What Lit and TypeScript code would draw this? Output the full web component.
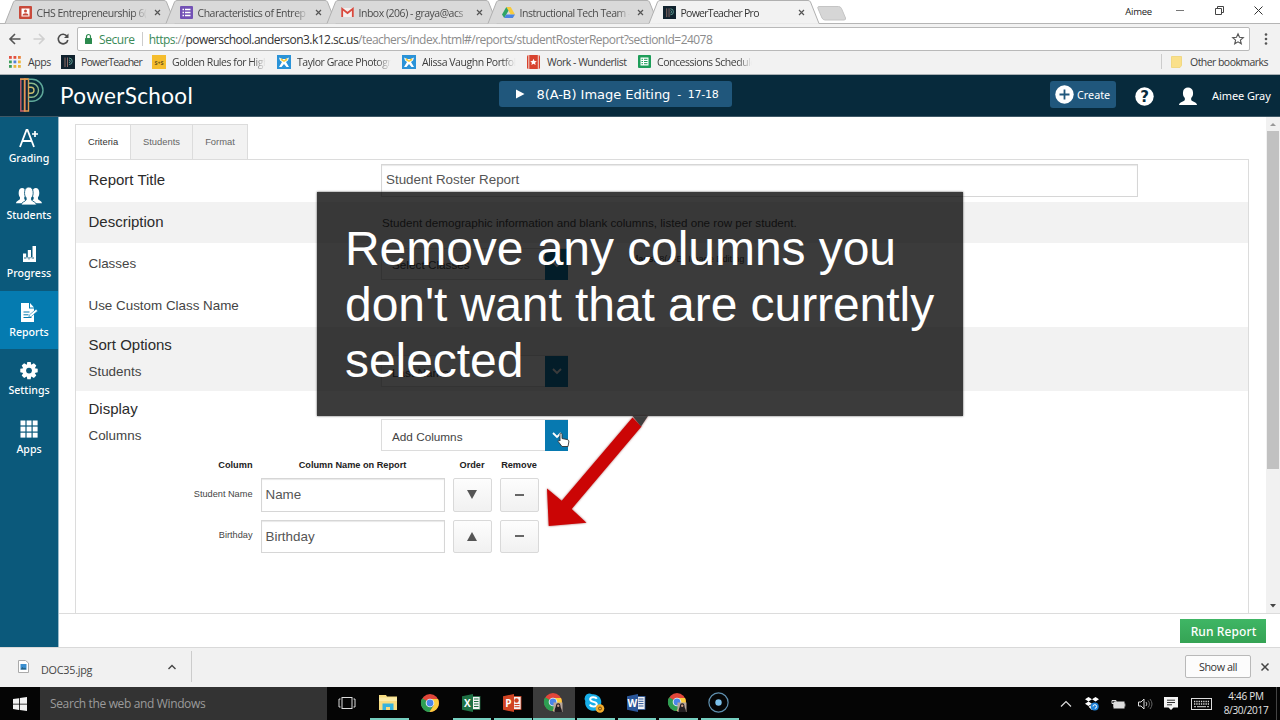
import { LitElement, html, css, svg } from "lit";
import { customElement } from "lit/decorators.js";
import { classMap } from "lit/directives/class-map.js";

const icon = (w: number, h: number, body: unknown, vb = `0 0 ${w} ${h}`) =>
  html`<svg width=${w} height=${h} viewBox=${vb}>${body}</svg>`;

const psMini = (s: number) => icon(s, s, svg`<rect width="14" height="14" fill="#10222e"/><path d="M4 2.500v9.500M6.500 2.500v9.500" stroke="#8a6a66" fill="none"/><path d="M8 3a3 3 0 0 1 0 6.500M8 5a1.300 1.300 0 0 1 0 2.600" stroke="#5b9a92" fill="none"/>`, "0 0 14 14");

const wix = icon(14, 14, svg`<rect width="14" height="14" fill="#2a93d8"/><path d="M2 2.500l3 1.500h4l3-1.500-1 3-2 1.500 3 5-2.500 0-2.500-3-2.500 3-2.500 0 3-5-2-1.500z" fill="#fff"/><path d="M4.500 3l2.500 2.500L9.500 3l1 2-3.500 2L3.500 5z" fill="#f4c93c"/>`);

const chromeLogo = svg`
  <circle cx="9" cy="9" r="9" fill="#e1463a"/>
  <path d="M9 9 1.200 4.500A9 9 0 0 0 9 18z" fill="#2e9e52"/>
  <path d="M1.200 4.500A9 9 0 0 0 8.500 18L12.800 11.200 9 9z" fill="#2e9e52"/>
  <path d="M9 5h8a9 9 0 0 1-8.500 13l4.300-6.800z" fill="#fbce3e"/>
  <circle cx="9" cy="9" r="4.300" fill="#f3f3f3"/><circle cx="9" cy="9" r="3.400" fill="#4a86e8"/>`;
const chrome = icon(18, 18, chromeLogo);
const chromeUser = icon(20, 19, svg`<g>${chromeLogo}</g><rect x="9.500" y="9.500" width="9" height="9.500" fill="#b9a79c"/><path d="M10.500 19c0-3 1-4 1.500-6.500a2.200 2.200 0 0 1 4.400 0c0 2.500 1.600 3.500 1.600 6.500z" fill="#241f22"/><circle cx="14.200" cy="12.800" r="1.200" fill="#c99a84"/>`);

const office = (letter: string, color: string, page: unknown) =>
  icon(19, 18, svg`<rect x="9" y="2.500" width="9" height="13" fill="#f4f4f4" stroke=${color} stroke-width=".8"/>${page}
    <path d="M0 2.200 11 0v18L0 15.800z" fill=${color}/><text x="5.300" y="12.800" text-anchor="middle" class="glyph">${letter}</text>`);

const TABS = [
  { title: "CHS Entrepreneurship 6(", icon: icon(13, 13, svg`<rect width="13" height="13" rx="1" fill="#c8493a"/><rect x="2.500" y="2.500" width="8" height="8" fill="#fff"/><circle cx="6.500" cy="5" r="1.500" fill="#c8493a"/><path d="M3.500 9.500c0-3 6-3 6 0z" fill="#c8493a"/>`) },
  { title: "Characteristics of Entrep", icon: icon(13, 13, svg`<rect width="13" height="13" rx="1" fill="#7351b5"/><path d="M2.500 3.500h1.500M2.500 6.500h1.500M2.500 9.500h1.500M5 3.500h5.500M5 6.500h5.500M5 9.500h5.500" stroke="#fff" stroke-width="1.400"/>`) },
  { title: "Inbox (206) - graya@acs", icon: icon(13, 13, svg`<path d="M1 2h11v9H1z" fill="#f4efee"/><path d="M1.200 11V2.800L6.500 7l5.300-4.200V11" fill="none" stroke="#d9493d" stroke-width="1.800"/>`) },
  { title: "Instructional Tech Team -", icon: icon(13, 13, svg`<path d="M4.300 1h4.400L13 8.500H8.700z" fill="#f7cb3d"/><path d="M4.300 1 0 8.500 2.200 12 6.500 4.800z" fill="#2fa465"/><path d="M4.300 8.500H13L10.800 12H2.200z" fill="#4a84e4"/>`) },
  { title: "PowerTeacher Pro", icon: psMini(13), active: true },
];

const BOOKMARKS = [
  { label: "Apps", cls: "b-apps", icon: icon(12, 12, svg`${[0, 1, 2].map(r => [0, 1, 2].map(c => svg`<rect x=${c * 4.500} y=${r * 4.500} width="2.800" height="2.800" fill=${["#e25041", "#e25041", "#e8833a", "#3f9e5a", "#5381d8", "#efb73a", "#3f9e5a", "#e9b53d", "#e9b53d"][r * 3 + c]}/>`))}`) },
  { label: "PowerTeacher", cls: "b-pt", icon: psMini(14) },
  { label: "Golden Rules for High", cls: "b-long fade", icon: icon(14, 14, svg`<rect width="14" height="14" fill="#f5bd2d"/><text x="7" y="9.600" text-anchor="middle" class="ss">S+S</text>`) },
  { label: "Taylor Grace Photogr", cls: "b-long fade", icon: wix },
  { label: "Alissa Vaughn Portfol", cls: "b-long fade", icon: wix },
  { label: "Work - Wunderlist", cls: "b-wl", icon: icon(14, 14, svg`<rect width="13" height="14" rx="1.500" fill="#d8432f"/><path d="M1.800 0v14M11.300 0v14" stroke="#f4d8cf" stroke-width="1"/><path d="M6.500 3.800l1 2.200 2.300.2-1.700 1.500.5 2.300-2.100-1.200-2.100 1.200.5-2.300-1.700-1.500 2.300-.2z" fill="#fff"/>`) },
  { label: "Concessions Schedule", cls: "b-long fade", icon: icon(13, 13, svg`<rect width="13" height="13" rx="1" fill="#1d9d59"/><path d="M2.500 2.500h8v8h-8z" fill="#fff"/><path d="M3.500 4.300h1.500M3.500 6.500h1.500M3.500 8.700h1.500M6 4.300h3.500M6 6.500h3.500M6 8.700h3.500" stroke="#1d9d59"/>`) },
];

const person = "M0 18c0-3 5-3.500 5.500-5v-2C4 9.500 3.500 7.500 3.800 5 4 2 6 .5 8.500.5S13 2 13.200 5c.3 2.500-.2 4.500-1.700 6v2c.5 1.500 5.500 2 5.500 5z";

const NAV = [
  { label: "Grading", icon: icon(22, 22, svg`<path d="M2 20 8.500 3h1L16 20M4.600 14h8.800" fill="none" stroke="#fff" stroke-width="1.800"/><path d="M14 7h6M17 4v6" stroke="#fff" stroke-width="1.700"/>`) },
  { label: "Students", icon: icon(26, 20, svg`<g fill="#fff"><path d=${person} transform="translate(0 1.500) scale(.72 .88)"/><path d=${person} transform="translate(13.700 1.500) scale(.72 .88)"/><path d=${person} transform="translate(5.200 .500) scale(.9 1.030)" stroke="#0b597b" stroke-width=".9"/></g>`) },
  { label: "Progress", icon: icon(15, 18, svg`<path d="M1 8.500h3.200V12H1zM5.800 5h3.200v7H5.800zM10.500 1h3.500v11h-3.500zM1 12h13v5H1z" fill="#fff"/><path d="M3 12v2M5 12v1.300M7 12v2.500M9 12v1.300M11 12v2" stroke="#0b597b" stroke-width=".9"/>`) },
  { label: "Reports", active: true, icon: icon(18, 20, svg`<path d="M1 1h8v5.500h5V20H1z" fill="#fff"/><path d="M10 1l4 4.500h-4z" fill="#fff"/><path d="M3.500 10h6M3.500 12.800h5M3.500 15.500h8" stroke="#057bb0" stroke-width="1"/><path d="M8.800 15.200l.6-2.300L16 7.300l1.700 1.700-6.500 5.600z" fill="#fff" stroke="#057bb0" stroke-width=".6"/>`) },
  { label: "Settings", icon: icon(20, 20, svg`<path d="M8.300 1h3.400l.5 2.800 2.700-1.600 2.400 2.400-1.500 2.600 2.900.6v3.500l-2.900.6 1.500 2.700-2.400 2.400-2.700-1.600-.5 2.800H8.300l-.5-2.800L5.100 17l-2.400-2.400 1.500-2.700-2.900-.6V7.800l2.900-.6L2.700 4.600l2.400-2.400 2.700 1.600z" fill="#fff"/><circle cx="10" cy="9.600" r="2.900" fill="#0b597b"/>`) },
  { label: "Apps", icon: icon(18, 18, svg`${[0, 1, 2].map(r => [0, 1, 2].map(c => svg`<rect x=${.5 + c * 6.100} y=${.5 + r * 6.100} width="4.900" height="4.900" fill="#fff"/>`))}`) },
];

const TASKS = [
  { kind: "none", icon: icon(18, 14, svg`<rect x="4" y="1.500" width="10" height="11" fill="none" stroke="#ddd"/><path d="M2.500 3H1v8h1.500M15.500 3H17v8h-1.500" fill="none" stroke="#ddd"/>`) },
  { kind: "open", icon: icon(20, 17, svg`<path d="M1 1h7l1 1.500h10V16H1z" fill="#f7dc80"/><path d="M1 3.500h18V7H1z" fill="#fbeaa6"/><path d="M4.500 16V9.500h11V16H12v-3H8v3z" fill="#35b3de"/>`) },
  { kind: "none", icon: chrome },
  { kind: "open", icon: office("X", "#1f7145", svg`<path d="M12 5h4.500M12 7.500h4.500M12 10h4.500M12 12.500h4.500" stroke="#1f7145"/>`) },
  { kind: "open", icon: office("P", "#d04423", svg`<circle cx="13.500" cy="6.500" r="2.200" fill="#d04423"/><path d="M11.500 10.500h5M11.500 12.700h5" stroke="#d04423"/>`) },
  { kind: "active", icon: chromeUser },
  { kind: "open", icon: icon(21, 20, svg`<path d="M5 .5a5 5 0 0 1 3 .8 8 8 0 0 1 9 10A5 5 0 0 1 11 17.500 8 8 0 0 1 1.300 8 5 5 0 0 1 5 .5z" fill="#17aee8"/><path d="M12.800 5.800C11.500 3.500 6 3.700 6.200 6.500c.2 3 6.600 1.700 6.600 4.700 0 2.900-5.800 3-7 .3" stroke="#fff" stroke-width="2" fill="none"/><circle cx="16" cy="15.500" r="4.300" fill="#f3ac2c"/><circle cx="16" cy="15.500" r="1.500" fill="none" stroke="#6e4a12"/>`) },
  { kind: "open", icon: office("W", "#2a5699", svg`<path d="M11.500 5h5M11.500 7.300h5M11.500 9.600h5M11.500 12h5" stroke="#2a5699"/>`) },
  { kind: "open", icon: chromeUser },
  { kind: "open", icon: icon(21, 21, svg`<circle cx="10.500" cy="10.500" r="9.600" fill="none" stroke="#5f8fae" stroke-width="1.200"/><circle cx="10.500" cy="10.500" r="3.200" fill="#7cc0ea"/>`) },
];

const COLUMNS = [
  { column: "Student Name", name: "Name", up: false },
  { column: "Birthday", name: "Birthday", up: true },
];

const base = css`
  * { box-sizing: border-box; }
  svg { display: block; flex: none; overflow: visible; }
`;

@customElement("browser-chrome")
class BrowserChrome extends LitElement {
  static styles = [base, css`
    :host { display: block; height: 75px; font: 10.500px "Open Sans", sans-serif; color: #4c4c4c; background: #f2f2f2; border-bottom: 1px solid #a9b0b4; }
    .tabs { display: flex; height: 24px; padding-left: 5px; background: #fff; border-bottom: 1px solid #b5b5b5; }
    .tab { position: relative; width: 161px; height: 24px; display: flex; align-items: center; padding: 1px 0 0 14px; }
    .shape { position: absolute; left: 0; top: 0; }
    .fav { position: relative; width: 17.500px; }
    .title { position: relative; width: 111px; overflow: hidden; white-space: nowrap; letter-spacing: -.48px; mask-image: linear-gradient(90deg, #000 87%, transparent 99%); }
    .active .title { color: #333; letter-spacing: -.72px; }
    .tab .x { position: relative; margin-left: 6px; }
    .newtab { margin: 6px 0 0 7px; }
    .window { display: flex; margin-left: auto; padding: 0 17px 2px 0; align-items: center; }
    .user { font-size: 9.500px; margin: 2px 24px 0 0; letter-spacing: -.2px; color: #222; }
    .restore { margin: 0 30px; }
    .bar { display: flex; align-items: center; height: 27px; padding: 3px 12px 0 9px; }
    .reload { margin: 0 8px 0 12px; }
    .fwd { margin-left: 12px; }
    .url { display: flex; align-items: center; width: 1173px; height: 24px; border: 1px solid #b9b9b9; border-radius: 2px; background: #fff; padding: 0 5px 0 7px; font-size: 12px; }
    .secure { color: #3b8a58; margin: 0 7px 0 7px; letter-spacing: -.4px; }
    .sep { width: 1px; height: 14px; background: #ccc; margin-right: 6px; }
    .address { letter-spacing: -.53px; color: #8b8b8b; white-space: nowrap; }
    .address b { font-weight: 400; color: #333; }
    .address i { font-style: normal; color: #3b8a58; }
    .star { margin-left: auto; }
    .menu { margin-left: 14px; }
    .marks { display: flex; align-items: center; height: 21px; padding-left: 9px; }
    .mark { display: flex; align-items: center; gap: 6px; white-space: nowrap; letter-spacing: -.46px; color: #3d3d3d; overflow: hidden; }
    .fade { mask-image: linear-gradient(90deg, #000 87%, transparent 99%); }
    .b-apps { width: 52px; gap: 7px; letter-spacing: -.4px; }
    .b-pt { width: 91px; letter-spacing: -.76px; }
    .b-long { width: 115px; margin-right: 10px; }
    .b-wl { width: 111px; letter-spacing: -.5px; }
    .other { display: flex; align-items: center; gap: 8px; margin-left: auto; padding: 0 12px 0 9px; height: 15px; border-left: 1px solid #ccc; letter-spacing: -.55px; color: #3d3d3d; }
    .ss { font: 700 5.500px "Open Sans", sans-serif; letter-spacing: 0; fill: #6b541c; }
  `];

  render() {
    return html`
      <div class="tabs">
        ${TABS.map(t => html`<div class=${classMap({ tab: true, active: !!t.active })}>
          <span class="shape">${icon(172, 24, svg`<path d="M0 23.500 8.500 2Q9.300.5 11 .5H159Q160.800.5 161.500 2L170 23.500" fill=${t.active ? "#f2f2f2" : "#d9d9d9"} stroke="#b0b0b0"/>${t.active ? svg`<path d="M.5 24h169" stroke="#f2f2f2" stroke-width="1.500"/>` : ""}`)}</span>
          <span class="fav">${t.icon}</span><span class="title">${t.title}</span>
          <span class="x">${icon(7, 7, svg`<path d="M1 1l5 5M6 1 1 6" stroke="#555" stroke-width="1.200"/>`)}</span>
        </div>`)}
        <span class="newtab">${icon(30, 15, svg`<path d="M1.500.5h20q2 0 3 2l4 9.500q.5 2-1.500 2H8q-2 0-3-2L1 2.500Q.5.5 1.500.5z" fill="#d6d6d6" stroke="#c4c4c4"/>`)}</span>
        <div class="window">
          <span class="user">Aimee</span>
          ${icon(9, 9, svg`<path d="M0 4.500h8" stroke="#777"/>`)}
          <span class="restore">${icon(9, 9, svg`<path d="M.5 2.500h6v6h-6zM2.500 2V.5h6v6H7" fill="none" stroke="#444"/>`)}</span>
          ${icon(9, 9, svg`<path d="M.5.5l8 8M8.500.5l-8 8" stroke="#333"/>`)}
        </div>
      </div>
      <div class="bar">
        ${icon(12, 12, svg`<path d="M11.500 6H1.500M6 1 1 6l5 5" fill="none" stroke="#555" stroke-width="1.600"/>`)}
        <span class="fwd">${icon(12, 12, svg`<path d="M.5 6h10M6 1l5 5-5 5" fill="none" stroke="#d0d0d0" stroke-width="1.600"/>`)}</span>
        <span class="reload">${icon(12, 12, svg`<path d="M10 3.200A4.800 4.800 0 1 0 10.800 7" fill="none" stroke="#4d4d4d" stroke-width="1.600"/><path d="M11.500.5V5H7z" fill="#4d4d4d"/>`)}</span>
        <div class="url">
          ${icon(7, 10, svg`<rect y="4" width="7" height="6" rx=".5" fill="#2c8a4e"/><path d="M1.500 4V2.500a2 2 0 0 1 4 0V4" fill="none" stroke="#2c8a4e" stroke-width="1.200"/>`)}
          <span class="secure">Secure</span><span class="sep"></span>
          <span class="address"><i>https</i>://<b>powerschool.anderson3.k12.sc.us</b>/teachers/index.html#/reports/studentRosterReport?sectionId=24078</span>
          <span class="star">${icon(12, 12, svg`<path d="M6 .8l1.500 3.500 3.800.3-2.900 2.500.9 3.700L6 8.800l-3.300 2 .9-3.700L.7 4.600l3.800-.3z" fill="none" stroke="#555" stroke-width="1.100"/>`)}</span>
        </div>
        <span class="menu">${icon(4, 12, svg`<circle cx="2" cy="1.500" r="1.300" fill="#555"/><circle cx="2" cy="6" r="1.300" fill="#555"/><circle cx="2" cy="10.500" r="1.300" fill="#555"/>`)}</span>
      </div>
      <div class="marks">
        ${BOOKMARKS.map(b => html`<div class="mark ${b.cls}">${b.icon}<span>${b.label}</span></div>`)}
        <div class="other">${icon(11, 12, svg`<path d="M.5.5h10v9l-1.500 2H.5z" fill="#fae08a" stroke="#f0d374" stroke-width=".8"/>`)}<span>Other bookmarks</span></div>
      </div>`;
  }
}

@customElement("app-header")
class AppHeader extends LitElement {
  static styles = [base, css`
    :host { display: flex; align-items: center; height: 42px; background: #072a3c; color: #fff; border-bottom: 1px solid #3e5866; padding-bottom: 1px; }
    .logo { margin-left: 19px; }
    .brand { font: 400 22.500px Lato, sans-serif; flex: none; margin: 1px 0 0 14px; width: 438.500px; letter-spacing: .35px; }
    .class { flex: none; display: flex; align-items: center; width: 233px; height: 26px; margin-top: -2px; border-radius: 3px; background: #20577c; padding-left: 17px; font: 13px "DejaVu Sans", sans-serif; white-space: nowrap; }
    .name { margin-left: 12px; letter-spacing: -.03px; }
    .term { margin-left: 7px; font-size: 11px; letter-spacing: -.2px; }
    .create { flex: none; display: flex; align-items: center; gap: 3px; width: 66px; height: 27px; margin: -2px 0 0 318.500px; padding-left: 5px; border-radius: 3px; background: #20577c; font: 10.800px "Noto Sans", sans-serif; }
    .help { margin: 2px 0 0 19px; }
    .avatar { margin: 2px 0 0 25px; }
    .who { margin: 1px 0 0 15px; font: 11px "Noto Sans", sans-serif; letter-spacing: -.08px; white-space: nowrap; }
    .q { font: 700 15px "DejaVu Sans", sans-serif; fill: #072a3c; }
  `];

  render() {
    return html`
      <span class="logo">${icon(27, 34, svg`<g fill="none" stroke-width="1.400">
        <path d="M1.800 33V1H6v32z" stroke="#c8616a"/><path d="M1 1.200h8.500" stroke="#dca24e"/>
        <path d="M5.500 33V1h4v32z" stroke="#e09a50"/>
        <path d="M9.500 1.200h3.500a11 11 0 0 1 0 22H9.500" stroke="#5fa99a"/>
        <path d="M9.500 5.200h3a7 7 0 0 1 0 14H9.500" stroke="#8bb98c"/>
        <path d="M9.500 9.200h2.500a3 3 0 0 1 0 6H9.500" stroke="#c9ba6c"/></g>`)}</span>
      <span class="brand">PowerSchool</span>
      <div class="class">${icon(9, 10, svg`<path d="M0 .5 8.500 5 0 9.500z" fill="#fff"/>`)}<span class="name">8(A-B) Image Editing</span><span class="term">-&nbsp; 17-18</span></div>
      <div class="create">${icon(19, 19, svg`<circle cx="9.500" cy="9.500" r="9.200" fill="#fff"/><path d="M4.500 9.500h10M9.500 4.500v10" stroke="#20577c" stroke-width="1.800"/>`)}<span>Create</span></div>
      <span class="help">${icon(19, 19, svg`<circle cx="9.500" cy="9.500" r="9.200" fill="#fff"/><text x="9.500" y="15" text-anchor="middle" class="q">?</text>`)}</span>
      <span class="avatar">${icon(18, 18, svg`<path d=${person} transform="scale(1.060 1)" fill="#fff"/>`)}</span>
      <span class="who">Aimee Gray</span>`;
  }
}

@customElement("side-nav")
class SideNav extends LitElement {
  static styles = [base, css`
    :host { display: flex; flex-direction: column; width: 59px; background: #0b597b; border-right: 1px solid #9dbccb; }
    .item { display: flex; flex-direction: column; align-items: center; height: 58.400px; color: #fff; font: 500 10.600px/14px "Noto Sans", sans-serif; }
    .item:first-child { height: 57.600px; margin-top: -.500px; }
    .glyph { display: flex; align-items: center; justify-content: center; height: 25px; margin: 9px 0 0; }
    .active { background: #057bb0; }
  `];

  render() {
    return NAV.map(n => html`<div class=${classMap({ item: true, active: !!n.active })}><span class="glyph">${n.icon}</span><span>${n.label}</span></div>`);
  }
}

@customElement("select-box")
class SelectBox extends LitElement {
  static properties = { label: {} };
  declare label: string;
  static styles = [base, css`
    :host { display: flex; width: 187px; height: 32px; border: 1px solid #dcdcdc; border-right: 0; background: #fff; font: 11.750px "Liberation Sans", sans-serif; color: #444; }
    .label { flex: 1; padding: 2px 0 0 10px; align-self: center; }
    .arrow { width: 23px; height: 31px; background: #0779b0; display: flex; align-items: center; justify-content: center; }
  `];

  render() {
    return html`<span class="label">${this.label}</span><span class="arrow">${icon(10, 7, svg`<path d="M1 1l4 4 4-4" fill="none" stroke="#fff" stroke-width="1.800"/>`)}</span>`;
  }
}

@customElement("report-form")
class ReportForm extends LitElement {
  static styles = [base, css`
    :host { display: flex; flex-direction: column; flex: 1; background: #fff; font-family: "Liberation Sans", sans-serif; color: #333; }
    .view { display: flex; height: 496px; }
    .page { display: flex; flex-direction: column; flex: 1; padding: 7px 17px 0 16px; }
    .tabs { display: flex; height: 36px; margin-bottom: -1px; font-size: 9.400px; color: #666; }
    .tab { display: flex; align-items: center; justify-content: center; background: #f2f2f2; border: 1px solid #dcdcdc; border-left: 0; padding-bottom: 2px; }
    .t1 { width: 56px; background: #fff; border-left: 1px solid #dcdcdc; border-bottom: 0; color: #333; }
    .t2 { width: 62px; }
    .t3 { width: 55px; }
    .panel { flex: 1; border: 1px solid #dcdcdc; border-bottom: 0; }
    .row { display: grid; grid-template-columns: 292.500px 1fr; align-items: center; height: 42px; padding: 0 0 2px 12.500px; font-size: 13.400px; color: #444; }
    .head { font-size: 15px; color: #2b2b2b; }
    .row > .head { padding-bottom: 1px; }
    .shade { background: #f2f2f2; }
    .row.shade { height: 41px; padding-bottom: 2px; }
    .desc { font-size: 11.650px; padding: 2px 0 0 1px; }
    .field { display: flex; align-items: center; border: 1px solid #d6d6d6; box-shadow: inset 0 1px 1px #e8e8e8; background: #fff; font-size: 13.400px; color: #555; padding-left: 4px; }
    .title { width: 757px; height: 33px; padding-bottom: 1px; }
    .pick { display: flex; gap: 61px; padding-top: 1px; }
    .chosen { font-size: 9.200px; padding-top: 6px; }
    .group { height: 64px; padding-left: 12.500px; font-size: 13.400px; color: #444; }
    .group .head { height: 25px; padding-top: 9px; line-height: 17px; }
    .line { display: grid; grid-template-columns: 292.500px 1fr; align-items: center; height: 36px; margin-top: 1px; }
    .cols { display: grid; grid-template-columns: 185px 184px 39px 39px; column-gap: 8px; align-items: center; margin: 4px 0 0 -21px; row-gap: 8px; width: 500px; }
    .cols b { font-size: 9.200px; color: #222; text-align: center; white-space: nowrap; height: 13px; padding-top: 3px; margin: 0 -3px; }
    .cols .name { font-size: 9.200px; text-align: right; padding-bottom: 2px; }
    .cols .first { text-align: right; margin: 0; }
    .cols .field { height: 33.500px; }
    .btn { height: 33.500px; display: flex; align-items: center; justify-content: center; border: 1px solid #d9d9d9; border-radius: 2px; background: linear-gradient(#fdfdfd, #f1f1f1); }
    .scroll { display: flex; flex-direction: column; width: 14px; background: #f1f1f1; }
    .up, .down { display: flex; align-items: center; justify-content: center; height: 14px; }
    .thumb { height: 338px; margin: 0 1px; background: #c1c1c1; }
    .down { margin-top: auto; }
    .foot { display: flex; align-items: center; justify-content: flex-end; height: 34px; padding: 1px 14px 0 0; border-top: 1px solid #dcdcdc; }
    .run { width: 86px; height: 24px; display: flex; align-items: center; justify-content: center; background: linear-gradient(#3fb665, #35a354); color: #fff; font: 500 12px "Noto Sans", sans-serif; letter-spacing: .1px; white-space: nowrap; padding-left: 1px; }
  `];

  render() {
    return html`
      <div class="view">
        <div class="page">
          <div class="tabs"><span class="tab t1">Criteria</span><span class="tab t2">Students</span><span class="tab t3">Format</span></div>
          <div class="panel">
            <div class="row"><span class="head">Report Title</span><span class="field title">Student Roster Report</span></div>
            <div class="row shade"><span class="head">Description</span><span class="desc">Student demographic information and blank columns, listed one row per student.</span></div>
            <div class="row"><span>Classes</span><span class="pick"><select-box label="Select Classes"></select-box><span class="chosen"><b>Class:</b> 8(A-B) Image Editing</span></span></div>
            <div class="row"><span>Use Custom Class Name</span></div>
            <div class="group shade"><div class="head">Sort Options</div><div class="line"><span>Students</span><select-box label="Last Name"></select-box></div></div>
            <div class="group">
              <div class="head">Display</div><div class="line"><span>Columns</span><select-box label="Add Columns"></select-box></div>
              <div class="cols">
                <b class="first">Column</b><b>Column Name on Report</b><b>Order</b><b>Remove</b>
                ${COLUMNS.map(c => html`
                  <span class="name">${c.column}</span><span class="field">${c.name}</span>
                  <span class="btn">${icon(10, 9, svg`<path d=${c.up ? "M5 0l5 9H0z" : "M0 0h10L5 9z"} fill="#555"/>`)}</span>
                  <span class="btn">${icon(9, 2, svg`<path d="M0 1h9" stroke="#555" stroke-width="1.800"/>`)}</span>`)}
              </div>
            </div>
          </div>
        </div>
        <div class="scroll"><span class="up">${icon(6, 3, svg`<path d="M3 0l3 3H0z" fill="#999"/>`)}</span><span class="thumb"></span><span class="down">${icon(6, 4, svg`<path d="M0 0h6L3 3.500z" fill="#444"/>`)}</span></div>
      </div>
      <div class="foot"><span class="run">Run Report</span></div>`;
  }
}

@customElement("download-bar")
class DownloadBar extends LitElement {
  static styles = [base, css`
    :host { display: flex; align-items: center; height: 40px; background: #f1f1f1; border-top: 1px solid #d9d9d9; font: 10.800px "Open Sans", sans-serif; color: #444; padding-bottom: 2px; }
    .file { display: flex; align-items: center; width: 192px; height: 31px; padding: 0 15px 0 18px; border-right: 1px solid #ccc; }
    .name { margin: 5px 0 0 12px; letter-spacing: -.25px; }
    .chev { margin-left: auto; }
    .all { margin: 0 10px 0 auto; width: 66px; height: 23px; display: flex; align-items: center; justify-content: center; border: 1px solid #b9b9b9; border-radius: 2px; background: #fcfcfc; color: #333; letter-spacing: -.45px; white-space: nowrap; }
    .close { margin-right: 11px; }
  `];

  render() {
    return html`
      <div class="file">${icon(11, 13, svg`<path d="M.5.5h7l3 2.500v9.500H.5z" fill="#fff" stroke="#aaa"/><rect x="2.500" y="4" width="6" height="5.500" fill="#3b8fd0"/><path d="M2.500 9.500l2-2.500 1.500 1.500 1-1 1.500 2z" fill="#265f7f"/>`)}<span class="name">DOC35.jpg</span><span class="chev">${icon(8, 6, svg`<path d="M.5 5 4 1.500 7.500 5" fill="none" stroke="#444" stroke-width="1.400"/>`)}</span></div>
      <span class="all">Show all</span>
      <span class="close">${icon(8, 8, svg`<path d="M.5.5l7 7M7.500.5l-7 7" stroke="#444" stroke-width="1.500"/>`)}</span>`;
  }
}

@customElement("task-bar")
class TaskBar extends LitElement {
  static styles = [base, css`
    :host { display: flex; height: 33px; background: #050505; color: #e6e6e6; font-family: "Open Sans", sans-serif; }
    .start { width: 40px; display: flex; align-items: center; justify-content: center; }
    .search { width: 287px; background: #333; display: flex; align-items: center; padding-left: 10px; font-size: 12px; letter-spacing: -.36px; color: #9b9b9b; }
    .task { width: 41.300px; display: flex; align-items: center; justify-content: center; padding-right: 1px; border-bottom: 2px solid transparent; }
    .open { border-image: linear-gradient(90deg, transparent 10%, #76cfc0 10% 92%, transparent 92%) 2; border-width: 0 0 2px; border-style: solid; }
    .active { background: #3c3c3c; border-bottom-color: #76cfc0; }
    .glyph { font: 700 10px "Open Sans", sans-serif; fill: #fff; }
    .tray { display: flex; align-items: center; gap: 12.500px; margin-left: auto; }
    .clock { width: 60px; text-align: center; font-size: 10px; line-height: 14px; letter-spacing: -.3px; margin: 0 0 2px -8px; }
    .edge { width: 4px; align-self: stretch; border-left: 1px solid #444; margin-left: -12.500px; }
  `];

  render() {
    return html`
      <span class="start">${icon(14, 14, svg`<path d="M0 2l6-.8v5.500H0zM6.800 1 14 0v6.700H6.800zM0 7.400h6v5.500L0 12zM6.800 7.400H14V14l-7.200-1z" fill="#f2f2f2"/>`)}</span>
      <span class="search">Search the web and Windows</span>
      ${TASKS.map(t => html`<span class="task ${t.kind}">${t.icon}</span>`)}
      <div class="tray">
        ${icon(12, 7, svg`<path d="M1 6.500l5-5 5 5" fill="none" stroke="#ddd" stroke-width="1.200"/>`)}
        ${icon(14, 14, svg`<path d="M3.500 0 7 2.300 3.500 4.500 0 2.300zM10.500 0 14 2.300l-3.500 2.200L7 2.300zM3.500 4.600 7 6.800 3.500 9 0 6.800zM3.500 9.800 7 7.800 9 9v3l-2 1z" fill="#fff"/><circle cx="9.700" cy="9.500" r="4" fill="#1e82d8"/><path d="M8 9.500a1.800 1.800 0 1 1 1.800 1.800" fill="none" stroke="#fff"/>`)}
        ${icon(14, 10, svg`<rect x="3" y="3" width="10" height="6" fill="#ddd" stroke="#ddd"/><path d="M13.800 4.500v3M1 1.500h4v3H1zM3 4v4" stroke="#ddd" fill="none"/>`)}
        ${icon(14, 12, svg`<path d="M.5 4H3l3-3v10L3 8H.5z" fill="none" stroke="#ddd"/><path d="M8 4a3 3 0 0 1 0 4" fill="none" stroke="#bbb"/><path d="M10 2.500a5 5 0 0 1 0 7M12 1a8 8 0 0 1 0 10" fill="none" stroke="#666"/>`)}
        ${icon(14, 13, svg`<path d="M0 0h14v10.500H9.500L7 13l-2.500-2.500H0z" fill="#f5f5f5"/><path d="M3 3.200h8M3 5.500h8M3 7.800h5" stroke="#333"/>`)}
        ${icon(21, 12, svg`<rect x=".5" y=".5" width="20" height="11" fill="none" stroke="#ddd"/><path d="M3 3.500h15M3 6h15" stroke="#ddd" stroke-width="1.300" stroke-dasharray="1.300 1"/><path d="M3 8.700h2M6 8.700h9M16 8.700h2" stroke="#ddd"/>`)}
        <div class="clock">4:46 PM<br>8/30/2017</div>
        <span class="edge"></span>
      </div>`;
  }
}

@customElement("app-root")
class AppRoot extends LitElement {
  static styles = [base, css`
    :host { display: flex; flex-direction: column; position: relative; width: 1280px; height: 720px; overflow: hidden; background: #fff; }
    .main { display: flex; height: 530px; }
    .callout { position: absolute; left: 317px; top: 192px; width: 646px; height: 224px; padding: 29px 28px; background: rgba(3, 3, 3, .775); box-shadow: 0 0 2px #555; color: #fff; font: 48px/56px "Liberation Sans", sans-serif; letter-spacing: -.06px; white-space: nowrap; }
    .arrow { position: absolute; left: 540px; top: 416px; filter: drop-shadow(0 0 1px #a66); }
    .cursor { position: absolute; left: 557px; top: 432px; }
  `];

  render() {
    return html`
      <browser-chrome></browser-chrome>
      <app-header></app-header>
      <div class="main"><side-nav></side-nav><report-form></report-form></div>
      <download-bar></download-bar>
      <task-bar></task-bar>
      <div class="arrow">${icon(110, 112, svg`<path d="M92.500 1.500 21.700 84.700 7 72.500 8.700 110 46.500 106.800 31.700 93 101.500 10.500z" fill="#cb0505"/><path d="M92.500 0h15.500l-7 10.500z" fill="#3f3f3f"/>`)}</div>
      <div class="callout">Remove any columns you<br>don't want that are currently<br>selected</div>
      <div class="cursor">${icon(13, 16, svg`<path d="M3 1.500c1-.8 2 0 2 1v4l5 1c1.500.3 2 1 1.800 2.500L11 14.500H5L1.200 9.500c-.6-1 .8-1.600 1.800-.5z" fill="#fff" stroke="#333" stroke-width=".9"/>`)}</div>`;
  }
}
